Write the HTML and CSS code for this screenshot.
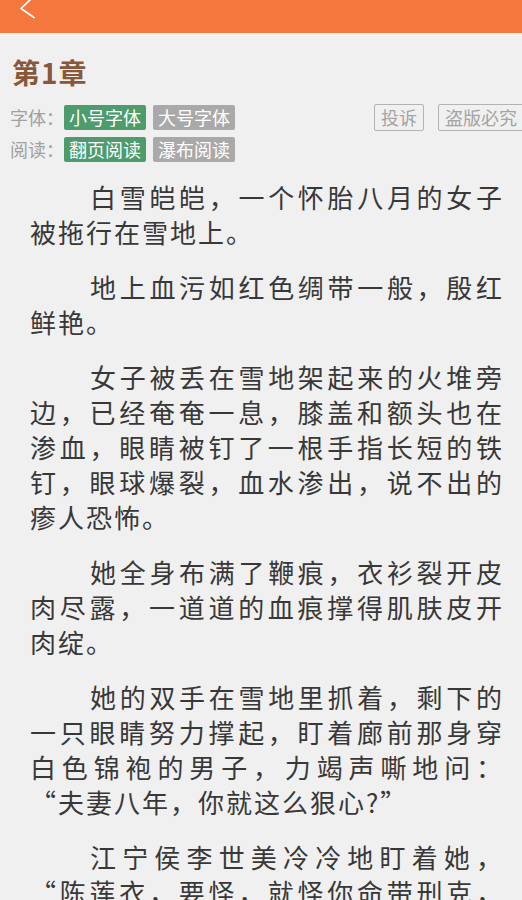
FILE: index.html
```html
<!DOCTYPE html>
<html lang="zh-CN">
<head>
<meta charset="utf-8">
<title>第1章</title>
<link rel="stylesheet" href="styles.css">
</head>
<body>
<header class="topbar">
  <svg class="back" width="40" height="33" viewBox="0 0 40 33" aria-hidden="true">
    <polyline points="31,-1 21,8.5 34,17.5" fill="none" stroke="#ffffff" stroke-width="1.7" stroke-linecap="round" stroke-linejoin="round"/>
  </svg>
</header>
<main class="page">
  <h1 class="chapter-title">第1章</h1>
  <div class="controls">
    <div class="row">
      <span class="label">字体：</span>
      <span class="btn btn-on">小号字体</span>
      <span class="btn btn-off">大号字体</span>
      <div class="right-group">
        <span class="btn-outline">投诉</span>
        <span class="btn-outline">盗版必究</span>
      </div>
    </div>
    <div class="row row-second">
      <span class="label">阅读：</span>
      <span class="btn btn-on">翻页阅读</span>
      <span class="btn btn-off">瀑布阅读</span>
    </div>
  </div>
  <article class="content">
    <p>白雪皑皑，一个怀胎八月的女子被拖行在雪地上。</p>
    <p>地上血污如红色绸带一般，殷红鲜艳。</p>
    <p>女子被丢在雪地架起来的火堆旁边，已经奄奄一息，膝盖和额头也在渗血，眼睛被钉了一根手指长短的铁钉，眼球爆裂，血水渗出，说不出的瘆人恐怖。</p>
    <p>她全身布满了鞭痕，衣衫裂开皮肉尽露，一道道的血痕撑得肌肤皮开肉绽。</p>
    <p>她的双手在雪地里抓着，剩下的一只眼睛努力撑起，盯着廊前那身穿白色锦袍的男子，力竭声嘶地问：<span class="nb"><span class="q">“</span>夫</span>妻八年，你就这么狠心?”</p>
    <p>江宁侯李世美冷冷地盯着她，<span class="nb"><span class="q">“</span>陈</span>莲衣，要怪，就怪你命带刑克，克了侯府。”</p>
  </article>
</main>
</body>
</html>
```

FILE: styles.css
```css
html, body {
  margin: 0;
  padding: 0;
}

body {
  background: #f0f0f0;
  font-family: "Noto Sans CJK SC", "Noto Sans", "Liberation Sans", sans-serif;
  overflow-x: hidden;
  color: #333333;
}

.topbar {
  height: 33px;
  background: #f4783d;
  overflow: hidden;
}

.back {
  display: block;
}

.page {
  padding-top: 24px;
}

.chapter-title {
  margin: 0;
  padding-left: 12px;
  font-size: 28px;
  line-height: 30px;
  letter-spacing: 1px;
  font-weight: bold;
  color: #8a573a;
}

.controls {
  margin-top: 17px;
  padding-left: 10px;
}

.row {
  display: flex;
  align-items: center;
  height: 27px;
}

.row-second {
  height: 25px;
  margin-top: 6px;
}

.label {
  font-size: 18px;
  color: #a0a0a0;
  width: 54px;
  white-space: nowrap;
  line-height: 25px;
}

.btn {
  display: inline-block;
  height: 25px;
  line-height: 25px;
  padding: 0 5px;
  font-size: 18px;
  color: #ffffff;
  border-radius: 2px;
  margin-right: 7px;
  white-space: nowrap;
}

.btn-on {
  background: #4e9b6c;
}

.btn-off {
  background: #a9a9a9;
}

.right-group {
  margin-left: auto;
  margin-right: -2px;
  display: flex;
  gap: 14px;
}

.btn-outline {
  display: inline-block;
  height: 25px;
  line-height: 25px;
  padding: 0 6px;
  font-size: 18px;
  color: #a4a4a4;
  border: 1px solid #b3b3b3;
  border-radius: 2px;
  white-space: nowrap;
}

.content {
  padding: 17px 18px 0 30px;
}

.content p {
  margin: 0 0 20px 0;
  font-size: 26px;
  line-height: 35px;
  letter-spacing: 2px;
  text-align: justify;
  text-indent: 60px;
  text-spacing-trim: space-all;
  color: #383838;
}

.nb {
  white-space: nowrap;
}

.q {
  display: inline-block;
  box-sizing: border-box;
  width: 28px;
  padding-right: 3px;
  text-align: right;
  text-indent: 0;
  letter-spacing: 0;
}
```
